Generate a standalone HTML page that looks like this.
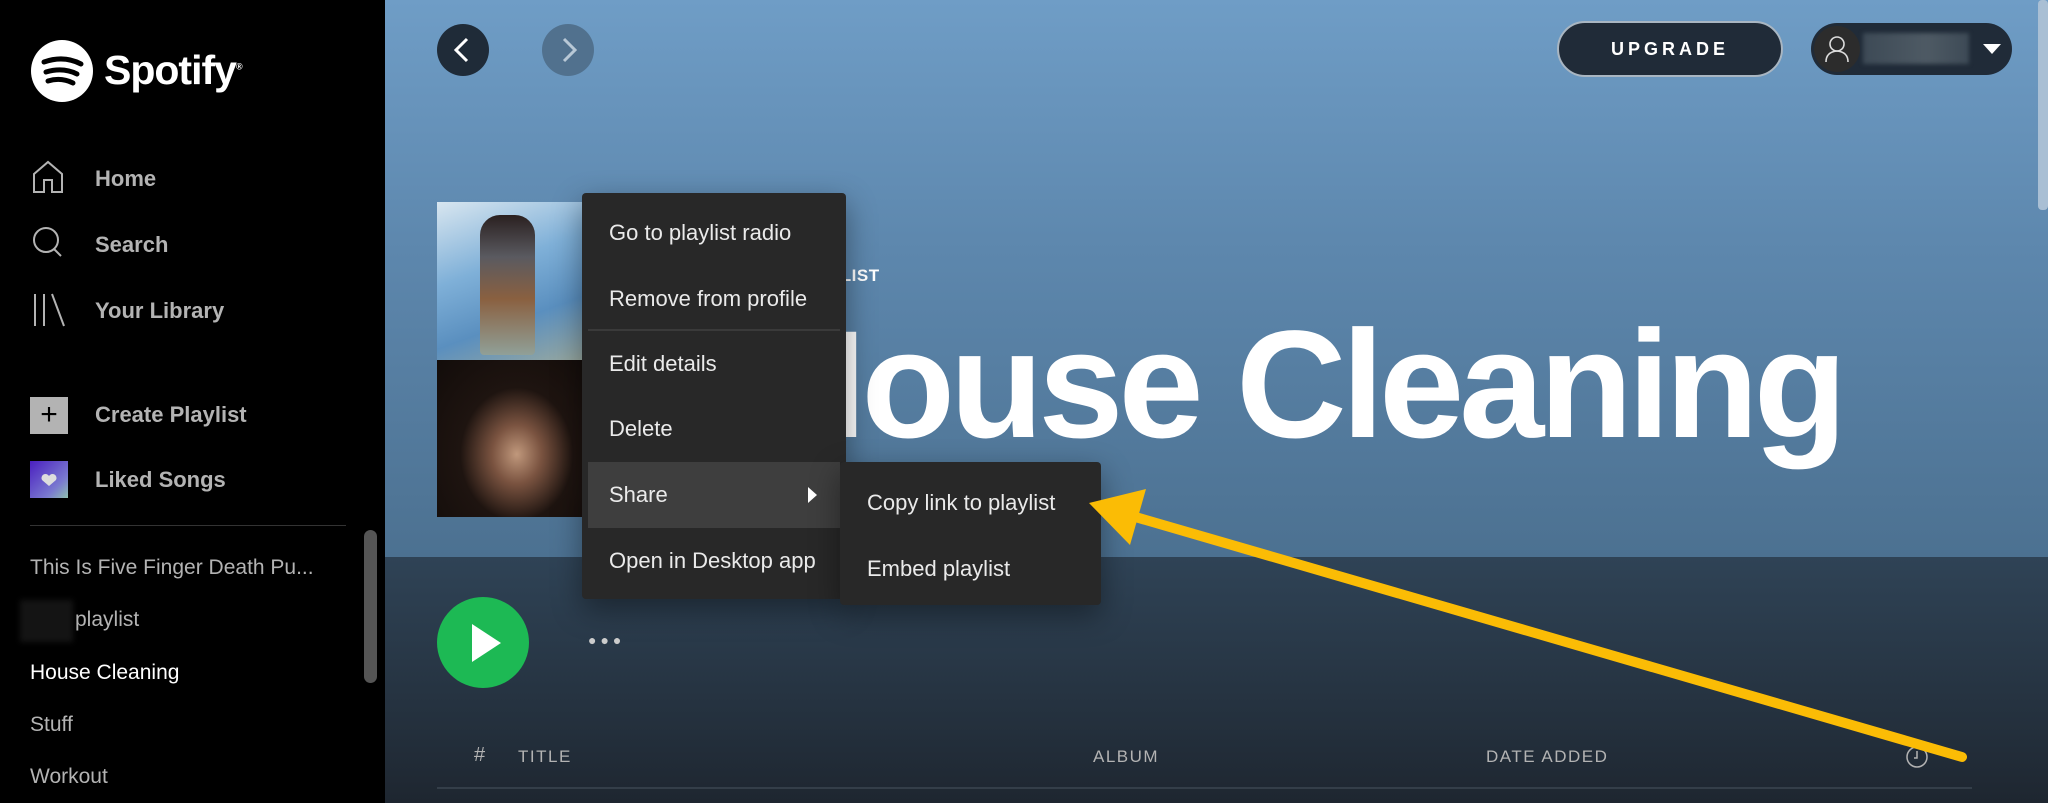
<!DOCTYPE html>
<html><head><meta charset="utf-8"><style>
*{margin:0;padding:0;box-sizing:border-box}
body{width:2048px;height:803px;overflow:hidden;position:relative;font-family:"Liberation Sans",sans-serif;background:#1e2631}
.side{position:absolute;left:0;top:0;width:385px;height:803px;background:#000}
.nav{position:absolute;left:95px;color:#b3b3b3;font-weight:bold;font-size:22px}
.pl{position:absolute;left:30px;color:#b3b3b3;font-size:21px}
.main{position:absolute;left:385px;top:0;width:1663px;height:803px;background:linear-gradient(#6f9dc6 0px,#5d87ad 250px,#4c7191 557px,#2f4356 557px,#222d39 750px,#1e2630 803px)}
.mi{position:absolute;left:27px;color:#eaeaea;font-size:22px}
.th{position:absolute;top:747px;color:#b3b3b3;font-size:17px;letter-spacing:1.5px}
</style></head><body>
<div class="side">
 <svg style="position:absolute;left:30px;top:39px" width="64" height="64" viewBox="0 0 64 64"><circle cx="32" cy="32" r="31" fill="#fff"/><path d="M14 23q20-7 37 2M16 33q17-5 31 2M18 42q13-4 25 2" stroke="#000" stroke-width="5" fill="none" stroke-linecap="round"/></svg>
 <div style="position:absolute;left:104px;top:47px;color:#fff;font-weight:bold;font-size:41px;letter-spacing:-1px">Spotify<sup style="font-size:9px">®</sup></div>
 <svg style="position:absolute;left:32px;top:160px" width="32" height="34" viewBox="0 0 32 34" fill="none" stroke="#b3b3b3" stroke-width="2"><path d="M2 14L16 2 30 14V32H20V20H12V32H2Z"/></svg>
 <div class="nav" style="top:166px">Home</div>
 <svg style="position:absolute;left:31px;top:226px" width="34" height="34" viewBox="0 0 34 34" fill="none" stroke="#b3b3b3" stroke-width="2"><circle cx="15" cy="14" r="12"/><path d="M23 23L30 30"/></svg>
 <div class="nav" style="top:232px">Search</div>
 <svg style="position:absolute;left:32px;top:292px" width="34" height="36" viewBox="0 0 34 36" stroke="#b3b3b3" stroke-width="2"><path d="M3 2V34M12 2V34M20 2L32 34"/></svg>
 <div class="nav" style="top:298px">Your Library</div>
 <div style="position:absolute;left:30px;top:397px;width:38px;height:37px;background:#b3b3b3;color:#000;font-size:30px;text-align:center;line-height:36px">+</div>
 <div class="nav" style="top:402px">Create Playlist</div>
 <div style="position:absolute;left:30px;top:461px;width:38px;height:37px;background:linear-gradient(135deg,#4a1fc0,#7a7ad0 70%,#8fc0b0)"><svg width="38" height="37" viewBox="0 0 38 37"><path d="M19 25l-7-6a4 4 0 017-4 4 4 0 017 4z" fill="#ddd"/></svg></div>
 <div class="nav" style="top:467px">Liked Songs</div>
 <div style="position:absolute;left:30px;top:525px;width:316px;height:1px;background:#333"></div>
 <div class="pl" style="top:556px">This Is Five Finger Death Pu...</div>
 <div style="position:absolute;left:20px;top:600px;width:53px;height:42px;background:#141414;filter:blur(3px)"></div>
 <div class="pl" style="top:608px;left:75px">playlist</div>
 <div class="pl" style="top:661px;color:#fff">House Cleaning</div>
 <div class="pl" style="top:713px">Stuff</div>
 <div class="pl" style="top:765px">Workout</div>
 <div style="position:absolute;left:364px;top:530px;width:13px;height:153px;border-radius:7px;background:#555"></div>
</div>
<div class="main">
 <svg style="position:absolute;left:52px;top:24px" width="180" height="54" viewBox="0 0 180 54"><circle cx="26" cy="26" r="26" fill="#1f2b38"/><path d="M30 15L19 26 30 37" stroke="#fff" stroke-width="3" fill="none"/><circle cx="131" cy="26" r="26" fill="#51718e"/><path d="M127 15L138 26 127 37" stroke="#b8c8d6" stroke-width="3" fill="none"/></svg>
 <div style="position:absolute;left:1172px;top:21px;width:226px;height:56px;border-radius:28px;background:#202b38;border:2px solid #a9b6c2;color:#fff;font-weight:bold;font-size:18px;letter-spacing:4px;text-align:center;line-height:52px">UPGRADE</div>
 <div style="position:absolute;left:1426px;top:23px;width:201px;height:52px;border-radius:26px;background:#202b38">
  <div style="position:absolute;left:3px;top:3px;width:46px;height:46px;border-radius:50%;background:#2c2c2c"><svg width="46" height="46" viewBox="0 0 46 46" fill="none" stroke="#ddd" stroke-width="1.6"><circle cx="23" cy="18" r="7"/><path d="M12 36q0-10 11-11 11 1 11 11"/></svg></div>
  <div style="position:absolute;left:52px;top:10px;width:106px;height:31px;background:linear-gradient(90deg,#3d4a56,#4e5a64 60%,#3d4a56);filter:blur(2px)"></div>
  <div style="position:absolute;left:172px;top:21px;width:0;height:0;border-left:9px solid transparent;border-right:9px solid transparent;border-top:10px solid #fff"></div>
 </div>
 <div style="position:absolute;right:0;top:0;width:10px;height:210px;background:#a9bfd4;border-radius:4px"></div>
 <div style="position:absolute;left:52px;top:202px;width:145px;height:158px;background:linear-gradient(160deg,#d8e6f0,#7fb0d8 40%,#5a8fbf 70%,#98a8a0)"></div>
 <div style="position:absolute;left:95px;top:215px;width:55px;height:140px;background:linear-gradient(#2a2020,#5a5a60 30%,#8a6040 60%,#90a098);border-radius:20px 20px 4px 4px"></div>
 <div style="position:absolute;left:52px;top:360px;width:145px;height:157px;background:radial-gradient(ellipse at 55% 60%,#c0987c 0,#7a5340 22%,#1e1410 50%,#120c0a)"></div>
 <div style="position:absolute;left:410px;top:266px;color:#fff;font-weight:bold;font-size:17px;letter-spacing:0.5px">PLAYLIST</div>
 <div style="position:absolute;left:371px;top:290px;color:#fff;font-weight:bold;font-size:153px;letter-spacing:-5px;line-height:190px;white-space:nowrap">House Cleaning</div>
 <div style="position:absolute;left:197px;top:193px;width:264px;height:406px;background:#282828;border-radius:4px;box-shadow:0 10px 30px rgba(0,0,0,.4)">
  <div class="mi" style="top:27px">Go to playlist radio</div>
  <div class="mi" style="top:93px">Remove from profile</div>
  <div style="position:absolute;left:6px;top:136px;width:252px;height:2px;background:#3a3a3a"></div>
  <div class="mi" style="top:158px">Edit details</div>
  <div class="mi" style="top:223px">Delete</div>
  <div style="position:absolute;left:6px;top:269px;width:252px;height:66px;background:#3e3e3e"></div>
  <div class="mi" style="top:289px">Share</div>
  <div style="position:absolute;left:226px;top:294px;border-top:8px solid transparent;border-bottom:8px solid transparent;border-left:9px solid #fff"></div>
  <div class="mi" style="top:355px">Open in Desktop app</div>
 </div>
 <div style="position:absolute;left:455px;top:462px;width:261px;height:143px;background:#282828;border-radius:4px;box-shadow:0 10px 30px rgba(0,0,0,.4)">
  <div class="mi" style="top:28px">Copy link to playlist</div>
  <div class="mi" style="top:94px">Embed playlist</div>
 </div>
 <div style="position:absolute;left:52px;top:597px;width:92px;height:91px;border-radius:50%;background:#1db954"></div>
 <div style="position:absolute;left:87px;top:624px;border-top:19px solid transparent;border-bottom:19px solid transparent;border-left:29px solid #fff"></div>
 <div style="position:absolute;left:203px;top:632px;color:#ccc;font-size:14px;letter-spacing:4px">●●●</div>
 <div class="th" style="left:89px;font-size:20px;top:744px">#</div>
 <div class="th" style="left:133px">TITLE</div>
 <div class="th" style="left:708px">ALBUM</div>
 <div class="th" style="left:1101px">DATE ADDED</div>
 <svg style="position:absolute;left:1520px;top:745px" width="24" height="24" viewBox="0 0 24 24" fill="none" stroke="#b3b3b3" stroke-width="1.5"><circle cx="12" cy="12" r="10"/><path d="M12 6v7h-3"/></svg>
 <div style="position:absolute;left:52px;top:787px;width:1535px;height:2px;background:#343e49"></div>
</div>
<svg style="position:absolute;left:0;top:0" width="2048" height="803"><path d="M1962 757L1125 514" stroke="#fbbc05" stroke-width="10" stroke-linecap="round"/><polygon points="1089,503 1130,545 1146,489" fill="#fbbc05"/></svg>
</body></html>
